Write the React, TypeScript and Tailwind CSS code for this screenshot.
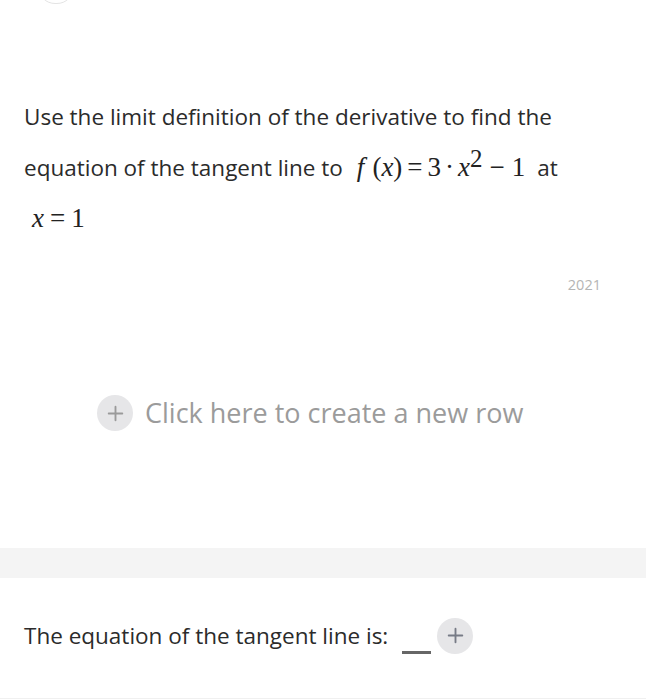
import React from 'react'

const PlusCircle: React.FC<{ size: string; icon: number; color: string }> = ({ size, icon, color }) => (
  <span className={`${size} rounded-full bg-[#e6e6e8] flex items-center justify-center shrink-0`}>
    <svg width={icon} height={icon} viewBox="0 0 20 20" fill="none" stroke={color} strokeWidth="2.2" strokeLinecap="round">
      <path d="M10 2v16M2 10h16" />
    </svg>
  </span>
)

const Math: React.FC<{ children: React.ReactNode }> = ({ children }) => (
  <span className="font-['Liberation_Serif',serif] text-[27px] text-[#222]">{children}</span>
)

const App: React.FC = () => {
  return (
    <div className="w-[646px] h-[700px] bg-white relative overflow-hidden font-['Open_Sans',sans-serif] text-[#2b2b2b]">
      {/* faint circle peeking from top */}
      <div className="absolute left-[38px] -top-[30px] w-[36px] h-[34px] rounded-full border border-[#e4e4e4] bg-white" />

      <div className="pt-[92px] px-[24px] text-[22.5px] leading-[50px]">
        <p className="whitespace-nowrap">Use the limit definition of the derivative to find the</p>
        <p className="whitespace-nowrap">
          equation of the tangent line to
          <Math>
            <i className="ml-[14px]">f</i>
            <span className="ml-[8px]">(</span>
            <i>x</i>)
            <span className="mx-[5px]">=</span>3<span className="mx-[4px]">·</span>
            <i>x</i>
            <sup className="text-[25px] relative -top-[9px]">2</sup>
            <span className="mx-[7px]">−</span>1
          </Math>
          <span className="ml-[12px]">at</span>
        </p>
        <p className="pl-[8px]">
          <Math>
            <i>x</i>
            <span className="mx-[6px]">=</span>1
          </Math>
        </p>
      </div>

      <div className="flex justify-end pr-[45px] mt-[30px] text-[14.5px] text-[#b5b5b5]">2021</div>

      <div className="flex items-center gap-[12px] pl-[97px] mt-[97px]">
        <PlusCircle size="w-[36px] h-[36px]" icon={17} color="#9a9a9a" />
        <span className="text-[27px] text-[#9b9b9b]">Click here to create a new row</span>
      </div>

      <div className="h-[30px] bg-[#f4f4f4] mt-[115px]" />

      <div className="flex items-center pl-[24px] mt-[39px]">
        <span className="text-[22.5px]">The equation of the tangent line is:</span>
        <span className="ml-[14px] w-[29px] h-[3px] bg-[#666] mt-[34px]" />
        <span className="ml-[6px]">
          <PlusCircle size="w-[36px] h-[36px]" icon={17} color="#777b86" />
        </span>
      </div>

      <div className="absolute left-0 right-0 bottom-[1px] h-px bg-[#f0f0f0]" />
    </div>
  )
}

export default App
